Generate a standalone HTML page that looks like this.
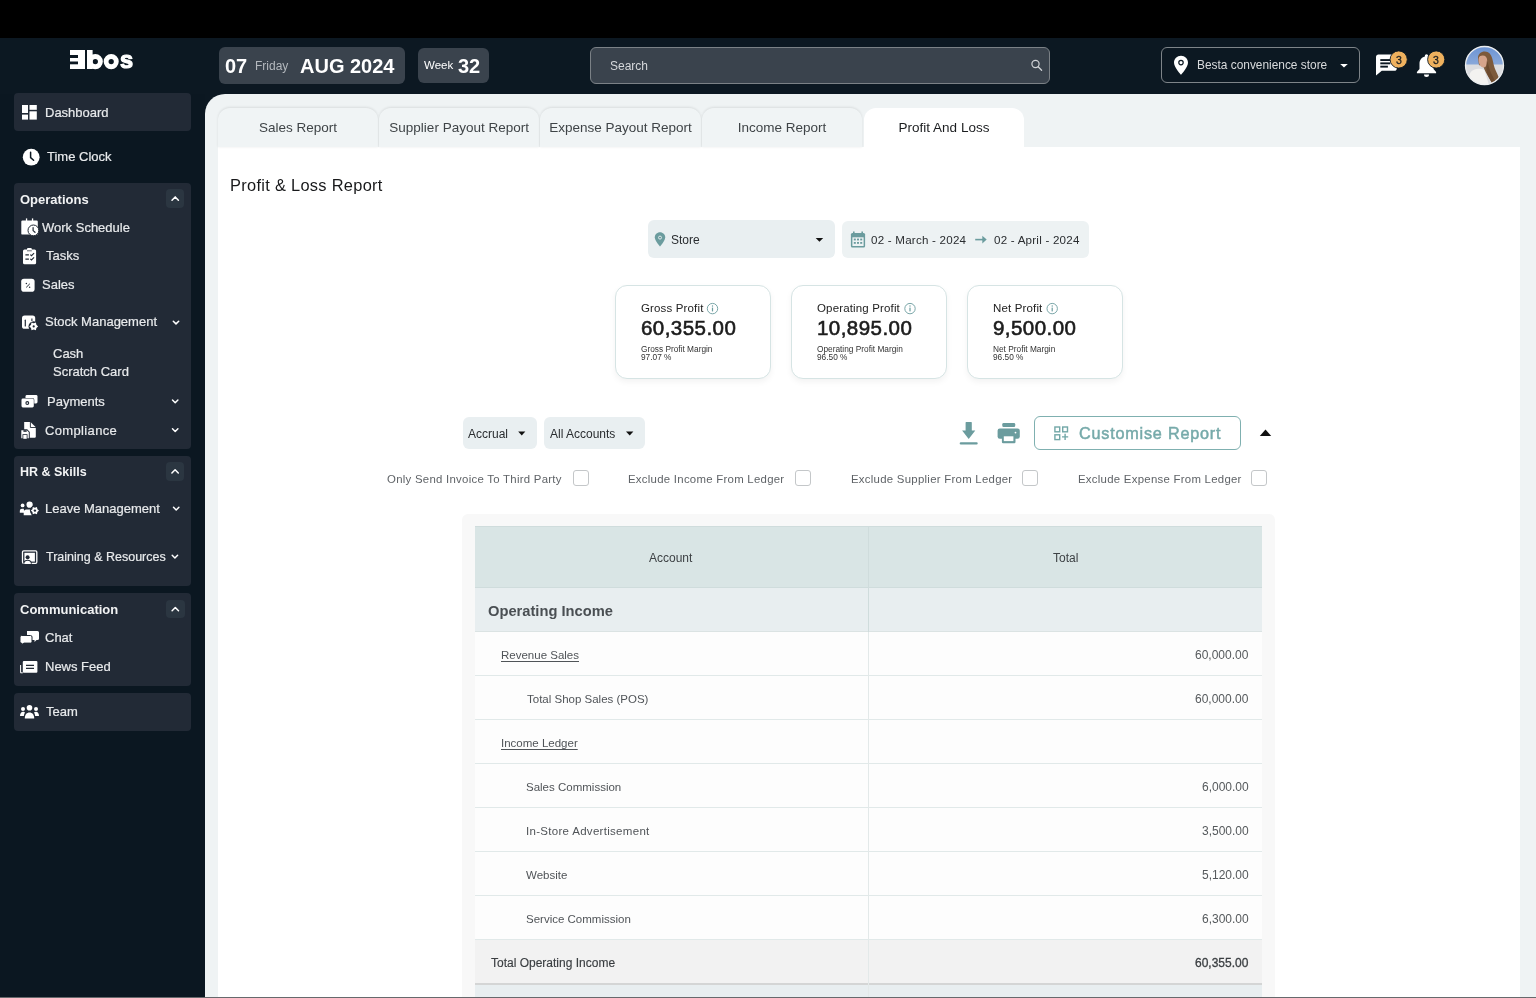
<!DOCTYPE html>
<html><head><meta charset="utf-8">
<style>
*{margin:0;padding:0;box-sizing:border-box}
html,body{width:1536px;height:998px;overflow:hidden;background:#0c1822;font-family:"Liberation Sans",sans-serif}
.a{position:absolute}
.t{position:absolute;white-space:nowrap;line-height:1;will-change:transform}
svg{position:absolute;overflow:visible}
#topbar{left:0;top:0;width:1536px;height:38px;background:#000}
#header{left:0;top:38px;width:1536px;height:56px;background:#0c1822}
#side{left:0;top:94px;width:205px;height:904px;background:#0b1721}
#main{left:205px;top:93.5px;width:1331px;height:905px;background:#eff3f4;border-top-left-radius:20px}
#panel{left:217.5px;top:146.5px;width:1302.5px;height:852px;background:#fff}
#bottomline{left:0;top:996.6px;width:1536px;height:1.4px;background:#66696c}
.hbox{background:#3a434d;border-radius:6px}
.wt{color:#fff}
.sb{color:#e8eaec;font-size:13px;-webkit-text-stroke:0.2px #e8eaec}
.grp{background:#222a36;border-radius:4px}
.cbtn{background:#2b3641;border-radius:4px}
.tab{position:absolute;top:108px;height:38.5px;background:#f0f4f5;border-radius:12px 12px 0 0;box-shadow:0 -0.5px 2.5px rgba(0,0,0,0.09);color:#3f4447;font-size:13.5px;text-align:center}
.tab span{position:absolute;left:0;right:0;top:12.6px;line-height:1;will-change:transform}
.card{position:absolute;top:284.5px;width:156px;height:94px;background:#fff;border:1px solid #d6e4e4;border-radius:12px;box-shadow:0 3px 6px rgba(0,0,0,0.05)}
.ct{position:absolute;left:25px;top:17.7px;font-size:11.5px;letter-spacing:0.15px;will-change:transform;color:#222;line-height:1;white-space:nowrap}
.cv{position:absolute;left:25px;top:32.6px;will-change:transform;font-size:20.5px;letter-spacing:0.45px;font-weight:400;-webkit-text-stroke:0.6px #1c1c1c;color:#1c1c1c;line-height:1;white-space:nowrap}
.cl{position:absolute;left:25px;will-change:transform;font-size:8.3px;color:#333;line-height:1;white-space:nowrap}
.dd{background:#e9eff1;border-radius:6px}
.chk{position:absolute;top:470px;width:16px;height:16px;border:1px solid #c4c7c9;border-radius:3px;background:#fff}
.cbl{color:#5f6367;font-size:11.4px;letter-spacing:0.27px}
.row{position:absolute;left:475px;width:787px;height:44px;border-bottom:1.3px solid #e1e9e9}
.lbl{position:absolute;will-change:transform;white-space:nowrap;line-height:1;font-size:11.5px;color:#505458;margin-top:0.7px}
.num{position:absolute;will-change:transform;right:13.5px;white-space:nowrap;line-height:1;font-size:12px;color:#55595c}
</style></head>
<body>
<div class="a" id="topbar"></div>
<div class="a" id="header"></div>
<div class="a" id="side"></div>
<div class="a" id="main"></div>
<div class="a" id="panel"></div>

<!-- ============ HEADER ============ -->
<svg style="left:0;top:0" width="1" height="1">
  <rect x="70" y="50" width="15" height="19" fill="#fff"/>
  <rect x="70" y="55" width="8" height="3" fill="#0c1822"/>
  <rect x="70" y="61.5" width="8" height="2.8" fill="#0c1822"/>
  <rect x="87" y="50" width="5.6" height="19" fill="#fff"/>
  <circle cx="95.3" cy="61.6" r="5.1" fill="none" stroke="#fff" stroke-width="4.9"/>
  <circle cx="111.2" cy="61.6" r="5.1" fill="none" stroke="#fff" stroke-width="4.9"/>
</svg>
<div class="t wt" style="left:119.8px;top:48.6px;font-size:23.5px;font-weight:700;-webkit-text-stroke:1.2px #fff;transform:scaleX(1.0);transform-origin:left">s</div>

<div class="a hbox" style="left:218.5px;top:46.6px;width:186px;height:37.2px"></div>
<div class="t wt" style="left:224.5px;top:55.6px;font-size:20px;font-weight:700">07</div>
<div class="t" style="left:255px;top:60px;font-size:12px;color:#b3b8bd">Friday</div>
<div class="t wt" style="left:300px;top:55.6px;font-size:20px;font-weight:700">AUG 2024</div>
<div class="a hbox" style="left:417.7px;top:47.6px;width:71px;height:35.4px"></div>
<div class="t wt" style="left:424px;top:59.9px;font-size:11.5px">Week</div>
<div class="t wt" style="left:457.5px;top:55.6px;font-size:20px;font-weight:700">32</div>

<div class="a" style="left:590px;top:47px;width:460px;height:36.5px;background:#3a434d;border:1px solid #7b8186;border-radius:6px"></div>
<div class="t" style="left:609.5px;top:59.5px;font-size:12px;color:#d5d8db">Search</div>
<svg style="left:0;top:0" width="1" height="1">
  <circle cx="1035.5" cy="64" r="3.6" fill="none" stroke="#d0d3d6" stroke-width="1.2"/>
  <line x1="1038.2" y1="66.8" x2="1041.6" y2="70.2" stroke="#d0d3d6" stroke-width="1.3" stroke-linecap="round"/>
</svg>

<div class="a" style="left:1161px;top:47px;width:199px;height:36.3px;border:1px solid #7e8489;border-radius:6px"></div>
<svg style="left:0;top:0" width="1" height="1">
  <path d="M1181 55.8c-3.9 0-7 3-7 6.9 0 4.6 7 12.1 7 12.1s7-7.5 7-12.1c0-3.9-3.1-6.9-7-6.9z" fill="#fff"/>
  <circle cx="1181" cy="62.6" r="2.2" fill="none" stroke="#0c1822" stroke-width="1.2"/>
  <path d="M1340.2 64h7.6l-3.8 3.6z" fill="#fff"/>
</svg>
<div class="t" style="left:1197.3px;top:59.9px;font-size:11.9px;color:#d8dadc">Besta convenience store</div>

<svg style="left:0;top:0" width="1" height="1">
  <path d="M1376 57c0-1.3 1-2.4 2.4-2.4h16c1.3 0 2.4 1 2.4 2.4v11.4c0 1.3-1 2.4-2.4 2.4h-12.6l-5.8 4.8z" fill="#fff"/>
  <rect x="1380.3" y="59.1" width="10" height="1.9" fill="#0c1822"/>
  <rect x="1380.3" y="62.4" width="10" height="1.9" fill="#0c1822"/>
  <rect x="1380.3" y="65.7" width="7.6" height="1.9" fill="#0c1822"/>
  <circle cx="1398.7" cy="59.5" r="8.6" fill="#efb15e" stroke="#0c1822" stroke-width="0.9"/>
  <path d="M1426.5 54.3c1 0 1.6.8 1.6 1.6v.6c3.6.8 5.4 3.8 5.4 7.3v5.2l2.6 3.1v1.2h-19.2v-1.2l2.6-3.1v-5.2c0-3.5 1.8-6.5 5.4-7.3v-.6c0-.8.6-1.6 1.6-1.6z" fill="#fff"/>
  <path d="M1424 74.6h5a2.5 2.5 0 0 1-5 0z" fill="#fff"/>
  <circle cx="1436.2" cy="59.5" r="8.6" fill="#efb15e" stroke="#0c1822" stroke-width="0.9"/>
</svg>
<div class="t" style="left:1395.8px;top:55px;font-size:10.5px;color:#222;-webkit-text-stroke:0.3px #222">3</div>
<div class="t" style="left:1433.3px;top:55px;font-size:10.5px;color:#222;-webkit-text-stroke:0.3px #222">3</div>

<svg style="left:1465px;top:45.6px" width="39" height="39" viewBox="0 0 39 39">
  <defs>
    <clipPath id="avc"><circle cx="19.5" cy="19.5" r="19"/></clipPath>
    <linearGradient id="sky" x1="0" y1="0" x2="0" y2="1"><stop offset="0" stop-color="#6b93d3"/><stop offset="1" stop-color="#8aa9da"/></linearGradient>
  </defs>
  <g clip-path="url(#avc)">
    <rect x="0" y="0" width="39" height="19" fill="url(#sky)"/>
    <rect x="0" y="18.5" width="39" height="21" fill="#dcdde0"/>
    <path d="M13 12c0-4 3-6.5 6.8-6.5 4 0 6.6 3 7.6 7.5 1 4 1.5 8 3.5 12 1.8 3.6 3.6 7 3 10.5l-6 3c-2-4-5-8-7-12-1.6-3-2.4-6-3.4-8-1 .5-2.5 1-3.5.5z" fill="#7d5a3b"/>
    <path d="M13.6 13c0-2.6 1.8-3.6 4.2-3.6 2.6 0 4.2 1.6 4.4 4.8.3 3.4-.6 6.8-3.6 7.2-2.8.3-5-3-5-8.4z" fill="#d6a48b"/>
    <path d="M4.5 39v-9c0-4 3-6.6 9-7.2 3-.3 5 .5 6 1.8l4.5 14.4z" fill="#f3f2f0"/>
    <path d="M22 14c1.5 4 2 9 4 13s4.5 8 5 11l-3 1.5c-1.5-4-4-7-5.5-11-1.2-3.2-1.5-7-.5-14.5z" fill="#6c4a2e"/>
  </g>
  <circle cx="19.5" cy="19.5" r="19" fill="none" stroke="#eceef0" stroke-width="1.3"/>
</svg>

<!-- ============ SIDEBAR ============ -->
<div class="a grp" style="left:14px;top:93.3px;width:177px;height:37.7px;border-radius:4px"></div>
<svg style="left:0;top:0" width="1" height="1">
  <rect x="22" y="105" width="6" height="8" fill="#fff"/>
  <rect x="22" y="114.6" width="6" height="5" fill="#fff"/>
  <rect x="29.5" y="105" width="7.3" height="4.8" fill="#fff"/>
  <rect x="29.5" y="111.3" width="7.3" height="8.3" fill="#fff"/>
</svg>
<div class="t sb" style="left:45px;top:105.6px">Dashboard</div>

<svg style="left:0;top:0" width="1" height="1">
  <circle cx="31.2" cy="157.2" r="8.4" fill="#fff"/>
  <path d="M30.6 152.2v5.4l3 2.6" fill="none" stroke="#0c1822" stroke-width="1.5" stroke-linecap="round"/>
</svg>
<div class="t sb" style="left:47px;top:150.4px">Time Clock</div>

<div class="a grp" style="left:14px;top:183px;width:177px;height:265.8px"></div>
<div class="t" style="left:20px;top:192.8px;font-size:13px;font-weight:700;color:#f2f3f4">Operations</div>
<div class="a cbtn" style="left:165.9px;top:189.2px;width:18.6px;height:19px"></div>

<div class="t sb" style="left:42px;top:220.8px">Work Schedule</div>
<div class="t sb" style="left:45.7px;top:249.4px">Tasks</div>
<div class="t sb" style="left:42px;top:278.2px">Sales</div>
<div class="t sb" style="left:45px;top:315.3px">Stock Management</div>
<div class="t sb" style="left:53.2px;top:347.2px">Cash</div>
<div class="t sb" style="left:53.2px;top:365px">Scratch Card</div>
<div class="t sb" style="left:46.8px;top:394.8px">Payments</div>
<div class="t sb" style="left:45.2px;top:423.6px;letter-spacing:0.35px">Compliance</div>

<div class="a grp" style="left:14px;top:455.6px;width:177px;height:130.9px"></div>
<div class="t" style="left:20px;top:465.7px;font-size:12.5px;font-weight:700;color:#f2f3f4">HR &amp; Skills</div>
<div class="a cbtn" style="left:165.7px;top:462.2px;width:18.7px;height:18.7px"></div>
<div class="t sb" style="left:45.2px;top:502.3px">Leave Management</div>
<div class="t sb" style="left:45.8px;top:550.5px;font-size:12.5px">Training &amp; Resources</div>

<div class="a grp" style="left:14px;top:593.3px;width:177px;height:92.4px"></div>
<div class="t" style="left:19.8px;top:603.2px;font-size:13px;font-weight:700;color:#f2f3f4">Communication</div>
<div class="a cbtn" style="left:165.9px;top:600.2px;width:18.8px;height:18.1px"></div>
<div class="t sb" style="left:45.4px;top:630.9px">Chat</div>
<div class="t sb" style="left:45.4px;top:660.1px">News Feed</div>

<div class="a grp" style="left:14px;top:692.7px;width:177px;height:37.9px"></div>
<div class="t sb" style="left:45.6px;top:705px">Team</div>

<svg id="sideicons" style="left:0;top:0" width="1" height="1" fill="#fff">
  <!-- chevrons up -->
  <path d="M172 200.2l3.2-3.3 3.2 3.3" fill="none" stroke="#fff" stroke-width="1.5" stroke-linecap="round" stroke-linejoin="round"/>
  <path d="M171.9 473l3.2-3.3 3.2 3.3" fill="none" stroke="#fff" stroke-width="1.5" stroke-linecap="round" stroke-linejoin="round"/>
  <path d="M172.1 610.8l3.2-3.3 3.2 3.3" fill="none" stroke="#fff" stroke-width="1.5" stroke-linecap="round" stroke-linejoin="round"/>
  <!-- chevrons down -->
  <path d="M173.3 321.2l2.7 2.7 2.7-2.7" fill="none" stroke="#fff" stroke-width="1.5" stroke-linecap="round" stroke-linejoin="round"/>
  <path d="M172.5 400l2.7 2.7 2.7-2.7" fill="none" stroke="#fff" stroke-width="1.5" stroke-linecap="round" stroke-linejoin="round"/>
  <path d="M172.5 428.8l2.7 2.7 2.7-2.7" fill="none" stroke="#fff" stroke-width="1.5" stroke-linecap="round" stroke-linejoin="round"/>
  <path d="M173.5 507.3l2.7 2.7 2.7-2.7" fill="none" stroke="#fff" stroke-width="1.5" stroke-linecap="round" stroke-linejoin="round"/>
  <path d="M172.2 555.3l2.7 2.7 2.7-2.7" fill="none" stroke="#fff" stroke-width="1.5" stroke-linecap="round" stroke-linejoin="round"/>
  <!-- work schedule -->
  <rect x="21.3" y="220.6" width="16.5" height="14" rx="1.2"/>
  <rect x="25.9" y="218.4" width="1.3" height="3"/><rect x="31.9" y="218.4" width="1.3" height="3"/>
  <circle cx="33.4" cy="230.4" r="5.4" fill="#fff" stroke="#222a35" stroke-width="1"/>
  <path d="M33.1 227.6v3l1.9 1.7" fill="none" stroke="#222a35" stroke-width="1.2" stroke-linecap="round"/>
  <!-- tasks -->
  <rect x="23" y="249.5" width="13.1" height="14.7" rx="1.5"/>
  <rect x="27" y="247.9" width="4.8" height="3" rx="1"/>
  <path d="M27 250.8h4.8" stroke="#222a35" stroke-width="0.7"/>
  <path d="M25.4 254.8h3.5M25.4 259.1h3.5" stroke="#222a35" stroke-width="1.2"/>
  <path d="M30.3 254.6l1.2 1.1 2.6-2.6M30.3 258.9l1.2 1.1 2.6-2.6" fill="none" stroke="#222a35" stroke-width="1.1"/>
  <!-- sales -->
  <rect x="21.2" y="278.8" width="13.4" height="12.9" rx="2.8"/>
  <path d="M26.2 287.4l3.6-3.6" stroke="#222a35" stroke-width="1"/>
  <circle cx="26.4" cy="283.6" r="0.75" fill="#222a35"/><circle cx="29.6" cy="287.2" r="0.75" fill="#222a35"/>
  <!-- stock mgmt -->
  <rect x="22" y="315.4" width="13.2" height="13.4" rx="2.6"/>
  <path d="M25.3 320.2v5.8" stroke="#222a36" stroke-width="1.2" stroke-linecap="round"/>
  <path d="M31.9 318.5v2.6" stroke="#222a36" stroke-width="1.1"/>
  <circle cx="33.7" cy="326.4" r="5.2" fill="#222a36"/>
  <polygon points="38.10,326.40 36.38,327.95 35.90,330.21 33.70,329.50 31.50,330.21 31.02,327.95 29.30,326.40 31.02,324.85 31.50,322.59 33.70,323.30 35.90,322.59 36.38,324.85" fill="#fff"/>
  <circle cx="33.7" cy="326.4" r="1.1" fill="#222a36"/>
  <!-- payments -->
  <rect x="25.5" y="395" width="12" height="8.4" rx="1.4"/>
  <rect x="21" y="398" width="13.3" height="10" rx="1.8" fill="#222a36"/>
  <rect x="21.5" y="398.5" width="12.3" height="9" rx="1.4"/>
  <circle cx="27.3" cy="403" r="1.4" fill="none" stroke="#222a36" stroke-width="1.1"/>
  <!-- compliance -->
  <path d="M24.2 422h6.3l5.3 5.3v9.4a1.1 1.1 0 0 1-1.1 1.1h-9.4a1.1 1.1 0 0 1-1.1-1.1z"/>
  <path d="M30.4 421.6v5.9h5.8" fill="none" stroke="#222a36" stroke-width="0.9"/>
  <path d="M20.3 429.3h6.9l2.6 2.6v7.4h-9.5z" fill="#222a36"/>
  <path d="M21.3 430.3h5.5l2 2v6h-7.5z"/>
  <rect x="23.4" y="430.2" width="3.3" height="1.6" fill="#222a36"/>
  <rect x="22.5" y="434.2" width="5" height="4.6" fill="#222a36"/>
  <rect x="23.3" y="435" width="3.4" height="3.8"/>
  <!-- leave mgmt -->
  <circle cx="22.6" cy="505.4" r="1.9"/>
  <path d="M19.8 512.7v-1.8c0-1.3 1-2.2 2.2-2.2h1.8l.4 4z"/>
  <circle cx="29.6" cy="504.7" r="3.1"/>
  <path d="M23.7 515.2v-3.2c0-1.5 1.2-2.6 2.6-2.6h5.4v5.8z"/>
  <circle cx="34.9" cy="510.6" r="5" fill="#222a36"/>
  <polygon points="39.00,510.60 37.41,512.05 36.95,514.15 34.90,513.50 32.85,514.15 32.39,512.05 30.80,510.60 32.39,509.15 32.85,507.05 34.90,507.70 36.95,507.05 37.41,509.15" fill="#fff"/>
  <circle cx="34.9" cy="510.6" r="1.2" fill="#222a36"/>
  <!-- training -->
  <rect x="22.5" y="550.9" width="14.3" height="12.4" rx="1.2" fill="none" stroke="#fff" stroke-width="1.3"/>
  <rect x="24.4" y="552.8" width="10.5" height="8.8"/>
  <circle cx="27.6" cy="557.2" r="2" fill="#222a36"/>
  <path d="M23.3 563.8c0-2.5 1.8-4 4.3-4s4.3 1.5 4.3 4z" fill="#222a36"/>
  <path d="M24.3 563.9c0-2 1.4-3.1 3.3-3.1s3.3 1.1 3.3 3.1z" fill="#fff"/>
  <!-- chat -->
  <path d="M27 631h10.5a1.5 1.5 0 0 1 1.5 1.5v6a1.5 1.5 0 0 1-1.5 1.5h-1l-2 2v-2h-7.5z"/>
  <path d="M21.5 635.5h9a1.5 1.5 0 0 1 1.5 1.5v4.6a1.5 1.5 0 0 1-1.5 1.5h-6.5l-2.5 1.5v-1.5h-0a1.5 1.5 0 0 1-1.5-1.5v-4.6a1.5 1.5 0 0 1 1.5-1.5z" stroke="#222a35" stroke-width="1"/>
  <!-- news feed -->
  <rect x="22.8" y="661.1" width="14.6" height="11.7" rx="1"/>
  <path d="M20.6 665v7.8h2.2" fill="none" stroke="#fff" stroke-width="1"/>
  <path d="M26 665.4h8M26 668.4h8" stroke="#222a35" stroke-width="1.3"/>
  <!-- team -->
  <circle cx="29.5" cy="707.8" r="2.8"/><circle cx="23" cy="709" r="2"/><circle cx="36" cy="709" r="2"/>
  <path d="M24.8 718.4c0-4 2-6 4.7-6s4.7 2 4.7 6z"/>
  <path d="M20 716c0-2.6 1.2-4.2 3-4.2 1 0 1.6.4 2 .8-.6.8-1 2-1.2 3.4z"/>
  <path d="M39 716c0-2.6-1.2-4.2-3-4.2-1 0-1.6.4-2 .8.6.8 1 2 1.2 3.4z"/>
</svg>

<!-- ============ TABS ============ -->
<div class="tab" style="left:217.5px;width:160.1px"><span>Sales Report</span></div>
<div class="tab" style="left:378.7px;width:160.3px"><span>Supplier Payout Report</span></div>
<div class="tab" style="left:540px;width:161px"><span>Expense Payout Report</span></div>
<div class="tab" style="left:702px;width:160px"><span>Income Report</span></div>
<div class="tab" style="left:864px;width:160px;background:#fff;box-shadow:none;color:#1c1e20"><span>Profit And Loss</span></div>

<!-- ============ CONTENT ============ -->
<div class="t" style="left:230px;top:176.6px;font-size:16.4px;letter-spacing:0.3px;color:#18191b">Profit &amp; Loss Report</div>

<div class="a dd" style="left:648px;top:220.2px;width:187.2px;height:38.3px"></div>
<div class="t" style="left:671.3px;top:233.9px;font-size:12px;color:#2a2d30">Store</div>
<div class="a" style="left:842.4px;top:220.5px;width:246.6px;height:37.5px;background:#edf2f3;border-radius:6px"></div>
<div class="t" style="left:870.6px;top:234.4px;font-size:11.6px;letter-spacing:0.22px;color:#2a2d30">02 - March - 2024</div>
<div class="t" style="left:993.9px;top:234.4px;font-size:11.6px;letter-spacing:0.22px;color:#2a2d30">02 - April - 2024</div>

<svg style="left:0;top:0" width="1" height="1">
  <path d="M660 232.2c-3 0-5.2 2.3-5.2 5.1 0 3.6 5.2 9.2 5.2 9.2s5.2-5.6 5.2-9.2c0-2.8-2.2-5.1-5.2-5.1z" fill="#6b9c9e"/>
  <circle cx="660" cy="237.6" r="1.5" fill="none" stroke="#e9eff1" stroke-width="0.9"/>
  <path d="M815.7 238h7.5l-3.75 3.8z" fill="#111"/>
  <!-- calendar -->
  <rect x="850.9" y="233" width="14.2" height="14.5" rx="1.5" fill="#6b9c9e"/>
  <rect x="853" y="231.5" width="1.6" height="3" fill="#6b9c9e"/><rect x="861.4" y="231.5" width="1.6" height="3" fill="#6b9c9e"/>
  <rect x="852.4" y="237.3" width="11.2" height="8.7" fill="#edf2f3"/>
  <g fill="#6b9c9e"><rect x="853.8" y="238.6" width="2" height="1.8"/><rect x="857" y="238.6" width="2" height="1.8"/><rect x="860.2" y="238.6" width="2" height="1.8"/>
  <rect x="853.8" y="242" width="2" height="1.8"/><rect x="857" y="242" width="2" height="1.8"/><rect x="860.2" y="242" width="2" height="1.8"/></g>
  <path d="M975.2 239.6h8" fill="none" stroke="#6b9c9e" stroke-width="1.6"/><path d="M982.3 235.8l4.4 3.8-4.4 3.8z" fill="#6b9c9e"/>
</svg>

<!-- cards -->
<div class="card" style="left:614.5px"><div class="ct">Gross Profit</div><div class="cv">60,355.00</div><div class="cl" style="top:59.5px">Gross Profit Margin</div><div class="cl" style="top:67.3px">97.07 %</div></div>
<div class="card" style="left:790.5px"><div class="ct">Operating Profit</div><div class="cv">10,895.00</div><div class="cl" style="top:59.5px">Operating Profit Margin</div><div class="cl" style="top:67.3px">96.50 %</div></div>
<div class="card" style="left:966.5px"><div class="ct">Net Profit</div><div class="cv">9,500.00</div><div class="cl" style="top:59.5px">Net Profit Margin</div><div class="cl" style="top:67.3px">96.50 %</div></div>
<svg style="left:0;top:0" width="1" height="1">
  <g fill="none" stroke="#6b9c9e" stroke-width="0.9">
    <circle cx="712.5" cy="308.6" r="5.2"/><circle cx="910" cy="308.6" r="5.2"/><circle cx="1052.2" cy="308.6" r="5.2"/>
  </g>
  <g fill="#6b9c9e">
    <rect x="711.9" y="307.6" width="1.2" height="3.8"/><circle cx="712.5" cy="306" r="0.7"/>
    <rect x="909.4" y="307.6" width="1.2" height="3.8"/><circle cx="910" cy="306" r="0.7"/>
    <rect x="1051.6" y="307.6" width="1.2" height="3.8"/><circle cx="1052.2" cy="306" r="0.7"/>
  </g>
</svg>

<!-- toolbar -->
<div class="a dd" style="left:462.6px;top:417.1px;width:74.7px;height:31.9px"></div>
<div class="t" style="left:468.3px;top:427.6px;font-size:12px;color:#2a2d30">Accrual</div>
<div class="a dd" style="left:544.2px;top:417.1px;width:100.9px;height:31.9px"></div>
<div class="t" style="left:550px;top:427.6px;font-size:12px;color:#2a2d30">All Accounts</div>
<div class="a" style="left:1034.2px;top:416.2px;width:206.9px;height:33.8px;border:1px solid #7fb0b0;border-radius:6px"></div>
<div class="t" style="left:1079.3px;top:424.8px;font-size:16.2px;font-weight:400;letter-spacing:0.8px;-webkit-text-stroke:0.5px #76aaaa;color:#76aaaa">Customise Report</div>
<svg style="left:0;top:0" width="1" height="1">
  <path d="M518.2 431.4h7.1l-3.55 4.2z" fill="#111"/>
  <path d="M626 431.4h7.4l-3.7 4.2z" fill="#111"/>
  <!-- download -->
  <path d="M965.6 422.5a.6.6 0 0 1 .6-.6h5a.6.6 0 0 1 .6.6v8h3.5l-6.6 8.6-6.6-8.6h3.5z" fill="#6b9c9e"/>
  <rect x="959.7" y="442.2" width="18" height="2.3" rx="1.1" fill="#6b9c9e"/>
  <!-- printer -->
  <rect x="1002.3" y="423" width="12.9" height="4" rx="1.2" fill="#6b9c9e"/>
  <rect x="997.6" y="428.5" width="22.2" height="10.2" rx="2.2" fill="#6b9c9e"/>
  <rect x="1001.9" y="436" width="13.6" height="7.3" rx="1.2" fill="#6b9c9e"/>
  <rect x="1003.8" y="436.3" width="9.6" height="4.8" fill="#fff"/>
  <circle cx="1015.5" cy="432.6" r="0.9" fill="#fff"/>
  <!-- grid -->
  <g fill="none" stroke="#72a7a7" stroke-width="1.4">
    <rect x="1054.9" y="427" width="4.8" height="4.8"/><rect x="1062.7" y="427" width="4.8" height="4.8"/><rect x="1054.9" y="434.8" width="4.8" height="4.8"/>
    <path d="M1065.1 433.8v6.2M1062 436.9h6.2"/>
  </g>
  <path d="M1259.8 435.9l5.7-6.4 5.7 6.4z" fill="#111"/>
</svg>

<!-- checkbox row -->
<div class="t cbl" style="left:386.5px;top:473.6px">Only Send Invoice To Third Party</div>
<div class="chk" style="left:572.8px"></div>
<div class="t cbl" style="left:628px;top:473.6px">Exclude Income From Ledger</div>
<div class="chk" style="left:795.3px"></div>
<div class="t cbl" style="left:850.5px;top:473.6px">Exclude Supplier From Ledger</div>
<div class="chk" style="left:1022.3px"></div>
<div class="t cbl" style="left:1077.6px;top:473.6px">Exclude Expense From Ledger</div>
<div class="chk" style="left:1251px"></div>

<!-- table -->
<div class="a" style="left:462px;top:513.7px;width:813px;height:490px;background:#f8f8f8;border-radius:6px"></div>
<div class="a" style="left:475px;top:526px;width:787px;height:62px;background:#d9e5e5;border-top:1px solid #cfdcdc;border-bottom:1px solid #cfdcdc"></div>
<div class="t" style="left:649.3px;top:551.5px;font-size:12px;color:#3e4245">Account</div>
<div class="t" style="left:1052.5px;top:551.5px;font-size:12px;color:#3e4245">Total</div>

<div class="row" style="top:588px;background:#e8eef0;border-bottom-color:#dbe3e3"></div>
<div class="t" style="left:487.8px;top:604px;font-size:14.7px;font-weight:700;color:#4a4f53">Operating Income</div>

<div class="row" style="top:632px;background:#fdfdfd"></div>
<div class="lbl" style="left:500.6px;top:649.2px;text-decoration:underline;text-underline-offset:2px">Revenue Sales</div>
<div class="row" style="top:676px;background:#fdfdfd"></div>
<div class="lbl" style="left:526.8px;top:693.5px">Total Shop Sales (POS)</div>
<div class="row" style="top:720px;background:#fdfdfd"></div>
<div class="lbl" style="left:500.6px;top:737.2px;text-decoration:underline;text-underline-offset:2px">Income Ledger</div>
<div class="row" style="top:764px;background:#fdfdfd"></div>
<div class="lbl" style="left:526px;top:781.2px">Sales Commission</div>
<div class="row" style="top:808px;background:#fdfdfd"></div>
<div class="lbl" style="left:526px;top:825.2px;letter-spacing:0.3px">In-Store Advertisement</div>
<div class="row" style="top:852px;background:#fdfdfd"></div>
<div class="lbl" style="left:526px;top:869.2px">Website</div>
<div class="row" style="top:896px;background:#fdfdfd"></div>
<div class="lbl" style="left:526px;top:913.2px">Service Commission</div>
<div class="row" style="top:940px;height:45px;background:#f2f2f2;border-bottom:2px solid #d4d5d5"></div>
<div class="t" style="left:491px;top:957px;font-size:12px;color:#3a3e41;-webkit-text-stroke:0.15px #3a3e41">Total Operating Income</div>
<div class="row" style="top:985px;background:#e8eef0"></div>

<div class="a" style="left:868px;top:526px;width:1px;height:472px;background:#e3e9e9"></div>
<div class="a" style="left:868px;top:526px;width:1px;height:106px;background:#cfdcdc"></div>

<div class="t num" style="left:auto;right:287.4px;top:648.6px">60,000.00</div>
<div class="t num" style="left:auto;right:287.4px;top:692.6px">60,000.00</div>
<div class="t num" style="left:auto;right:287.4px;top:780.6px">6,000.00</div>
<div class="t num" style="left:auto;right:287.4px;top:824.6px">3,500.00</div>
<div class="t num" style="left:auto;right:287.4px;top:868.6px">5,120.00</div>
<div class="t num" style="left:auto;right:287.4px;top:912.6px">6,300.00</div>
<div class="t num" style="left:auto;right:287.4px;top:956.6px;color:#3a3e41;-webkit-text-stroke:0.3px #3a3e41">60,355.00</div>

<div class="a" id="bottomline"></div>
</body></html>
